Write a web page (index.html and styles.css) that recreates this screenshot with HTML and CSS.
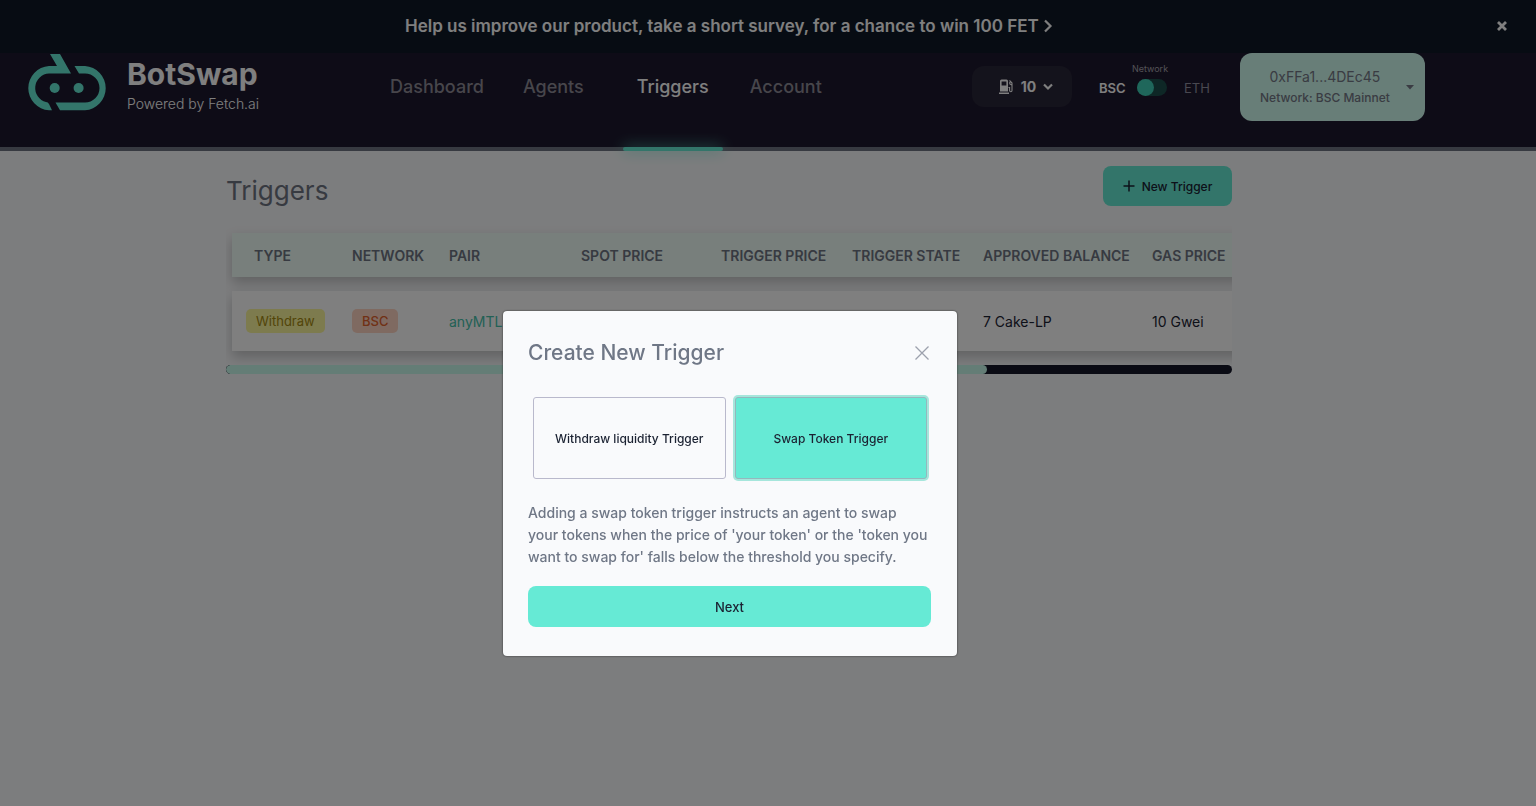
FILE: index.html
```html
<!DOCTYPE html>
<html lang="en">
<head>
<meta charset="utf-8">
<meta name="viewport" content="width=device-width, initial-scale=1">
<title>BotSwap</title>
<link rel="stylesheet" href="styles.css">
</head>
<body>
<div class="banner">
  <a class="banner-link" href="#">Help us improve our product, take a short survey, for a chance to win 100 FET
    <svg width="10" height="14" viewBox="0 0 10 14" aria-hidden="true"><path d="M2 1.500l5.500 5.500L2 12.500" fill="none" stroke="currentColor" stroke-width="2.200"/></svg></a>
  <button class="banner-close" type="button" aria-label="Dismiss">
    <svg width="12" height="12" viewBox="0 0 12 12"><path d="M2 2l8 8M10 2l-8 8" stroke="currentColor" stroke-width="2.800"/></svg>
  </button>
</div>
<header class="header">
  <a class="brand" href="#">
    <svg class="brand-mark" width="82" height="58" viewBox="0 0 82 58" aria-hidden="true">
      <path d="M24 1h10l11 19.500H23a14.500 14.500 0 0 0-3 28.500q2 0 3 2l3 6.300h-3A22.200 22.200 0 0 1 23 13h8z"/>
      <path d="M48.500 13H59a22.200 22.200 0 0 1 0 44.300H34L29.500 49.500H59a14.500 14.500 0 0 0 0-29h-6z"/>
      <circle cx="28.700" cy="35" r="5"/><circle cx="52.600" cy="35" r="5"/>
    </svg>
    <span class="brand-text"><span class="brand-name">BotSwap</span><span class="brand-sub">Powered by Fetch.ai</span></span>
  </a>
  <nav class="nav">
    <a href="#">Dashboard</a>
    <a href="#">Agents</a>
    <a class="current" href="#" aria-current="page">Triggers</a>
    <a href="#">Account</a>
  </nav>
  <div class="tools">
    <button class="gas" type="button">
      <svg width="15" height="16" viewBox="0 0 15 16" aria-hidden="true"><path fill="currentColor" fill-rule="evenodd" d="M1 2a1.500 1.500 0 0 1 1.500-1.500h5A1.500 1.500 0 0 1 9 2v10.500H1zM2.600 2.500v4h4.800v-4zM0 13.500h10V15H0z"/><path d="M10.500 1.500l2.500 2.500v7.500a1.200 1.200 0 0 1-2.400 0V8.500H9.500M10.800 3v2l2 1" fill="none" stroke="currentColor" stroke-width="1.100"/></svg>
      10
      <svg width="10" height="8" viewBox="0 0 10 8" aria-hidden="true"><path d="M1 1.500L5 5.500l4-4" fill="none" stroke="currentColor" stroke-width="2.200"/></svg>
    </button>
    <div class="network">
      <label class="network-label" for="net">Network</label>
      <span class="net-on">BSC</span>
      <input class="switch" id="net" type="checkbox" role="switch">
      <span class="net-off">ETH</span>
    </div>
    <button class="wallet" type="button">
      <span class="wallet-text"><span class="address">0xFFa1...4DEc45</span><span class="chain">Network: BSC Mainnet</span></span>
      <svg width="8" height="5" viewBox="0 0 8 5" aria-hidden="true"><path d="M0 0h8L4 4.500z" fill="currentColor"/></svg>
    </button>
  </div>
</header>
<main class="main">
  <div class="title-row">
    <h1>Triggers</h1>
    <button class="new-trigger" type="button">
      <svg width="12" height="12" viewBox="0 0 12 12" aria-hidden="true"><path d="M6 .5v11M.5 6h11" stroke="currentColor" stroke-width="1.500"/></svg>
      New Trigger
    </button>
  </div>
  <div class="table-wrap">
    <table>
      <colgroup><col class="c-type"><col class="c-network"><col class="c-pair"><col class="c-spot"><col class="c-price"><col class="c-state"><col class="c-balance"><col class="c-gas"></colgroup>
      <thead><tr><th>TYPE</th><th>NETWORK</th><th>PAIR</th><th>SPOT PRICE</th><th>TRIGGER PRICE</th><th>TRIGGER STATE</th><th>APPROVED BALANCE</th><th>GAS PRICE</th></tr></thead>
      <tbody><tr><td><span class="tag tag-withdraw">Withdraw</span></td><td><span class="tag tag-bsc">BSC</span></td><td><a class="pair" href="#">anyMTLX</a></td><td></td><td></td><td></td><td>7 Cake-LP</td><td>10 Gwei</td></tr></tbody>
    </table>
  </div>
  <div class="scrollbar"><div class="thumb" style="width:75.6%"></div></div>
</main>
<div class="overlay">
  <section class="modal" role="dialog" aria-modal="true" aria-labelledby="modal-title">
    <div class="modal-head">
      <h2 id="modal-title">Create New Trigger</h2>
      <button class="modal-close" type="button" aria-label="Close"><svg width="14" height="14" viewBox="0 0 14 14"><path d="M.5 .5l13 13M13.500 .5l-13 13" stroke="currentColor" stroke-width="1.300"/></svg></button>
    </div>
    <div class="options">
      <button class="option" type="button">Withdraw liquidity Trigger</button>
      <button class="option selected" type="button">Swap Token Trigger</button>
    </div>
    <p>Adding a swap token trigger instructs an agent to swap<br>your tokens when the price of 'your token' or the 'token you<br>want to swap for' falls below the threshold you specify.</p>
    <button class="next" type="button">Next</button>
  </section>
</div>
</body>
</html>
```

FILE: styles.css
```css
* { box-sizing: border-box; }
body {
  margin: 0;
  min-height: 100vh;
  background: #f9fafc;
  color: #1b2232;
  font-family: Inter, "Liberation Sans", sans-serif;
  font-size: 14px;
}
button { border: 0; padding: 0; background: none; color: inherit; font: inherit; }
a { color: inherit; text-decoration: none; }
h1, h2, p { margin: 0; }

.banner {
  display: flex;
  align-items: center;
  height: 53px;
  padding: 0 28px 2px 0;
  background: #0e1826;
  color: #fff;
}
.banner-link {
  flex: 1;
  padding-right: 38px;
  text-align: center;
  font-size: 17px;
  font-weight: 600;
}
.banner-link svg { vertical-align: -1px; }
.banner-close { display: flex; }

.header {
  display: flex;
  height: 98px;
  padding: 0 111px 0 26px;
  background: #1d182e;
  border-bottom: 4px solid #6f7482;
  color: #fff;
}
.brand { display: flex; gap: 19px; width: 364px; align-items: flex-start; }
.brand-mark { fill: #66ead5; }
.brand-text { display: flex; flex-direction: column; padding-top: 4px; }
.brand-name { font-size: 30px; line-height: 34px; font-weight: 700; }
.brand-sub { font-size: 14px; line-height: 26px; font-weight: 300; }
.nav { display: flex; gap: 39px; }
.nav a {
  padding-top: 22px;
  font-size: 18px;
  line-height: 24px;
  font-weight: 500;
  color: #8e8c97;
}
.nav .current {
  position: relative;
  padding-left: 14px;
  padding-right: 14px;
  margin-right: -12px;
  color: #fff;
}
.nav .current::after {
  content: "";
  position: absolute;
  inset: auto 0 -4px;
  height: 4px;
  border-radius: 2px;
  background: #66ead5;
  box-shadow: 0 0 14px #66ead5;
}
.tools { display: flex; flex: 1; align-items: flex-start; justify-content: flex-end; }
.gas {
  display: flex;
  align-items: center;
  justify-content: center;
  gap: 7px;
  width: 100px;
  height: 41px;
  padding-left: 8px;
  margin: 13px 27px 0 0;
  border-radius: 12px;
  background: #292638;
  font-weight: 700;
}
.network {
  display: grid;
  grid-template-columns: 38px 40px 30px;
  align-items: center;
  margin: 10px 33px 0 0;
  font-size: 13px;
}
.network-label { grid-column: 1 / -1; text-align: center; padding-right: 6px; font-size: 9px; line-height: 12px; color: #a5a3ad; }
.net-on { font-weight: 600; }
.net-off { color: #9391a0; padding-left: 7px; }
.switch {
  appearance: none;
  width: 30px;
  height: 17px;
  margin: 4px 0;
  border-radius: 9px;
  background: #1c4f4c;
}
.switch::before {
  content: "";
  display: block;
  width: 17px;
  height: 17px;
  border-radius: 50%;
  background: #3ecfb6;
}
.wallet {
  display: flex;
  align-items: center;
  justify-content: space-between;
  width: 185px;
  height: 68px;
  padding: 0 11px 0 20px;
  border-radius: 12px;
  background: #d0fcf0;
  color: #747886;
}
.wallet-text { display: flex; flex-direction: column; align-items: center; }
.address { font-size: 14px; line-height: 22px; }
.chain { font-size: 12px; line-height: 20px; font-weight: 500; }

.main { max-width: 1006px; margin: 15px 304px 0 auto; }
.title-row { display: flex; justify-content: space-between; height: 53px; }
h1 { font-size: 26px; line-height: 50px; font-weight: 400; color: #6f7482; }
.new-trigger {
  display: flex;
  align-items: center;
  justify-content: center;
  gap: 7px;
  width: 129px;
  height: 40px;
  border-radius: 8px;
  background: #66ead5;
  font-size: 12px;
  font-weight: 500;
}
.table-wrap { overflow: hidden; padding-left: 6px; }
table { table-layout: fixed; width: 1324px; border-collapse: separate; border-spacing: 0 14px; }
.c-type { width: 120px; }
.c-network { width: 97px; }
.c-pair { width: 132px; }
.c-spot { width: 140px; }
.c-price, .c-state { width: 131px; }
.c-balance { width: 169px; }
tr { box-shadow: 0 6px 12px rgba(0, 0, 0, .22); }
th, td { padding: 0; text-align: left; white-space: nowrap; }
th { height: 44px; background: #f0fff9; color: #6f7482; font-size: 14px; font-weight: 600; }
th:first-child { padding-left: 22px; }
td { height: 60px; background: #fff; }
td:first-child { padding-left: 14px; }
.tag { display: inline-block; padding: 0 10px; border-radius: 5px; font-size: 13px; line-height: 24px; }
.tag-withdraw { background: #fbf69c; color: #a58a10; }
.tag-bsc { background: #ffd5c3; color: #e2632c; font-weight: 500; }
.pair { color: #45c2ab; }
.scrollbar { height: 9px; border-radius: 5px; background: #151729; overflow: hidden; }
.thumb { height: 9px; border-radius: 5px; background: #c8fbed; }

.overlay {
  position: fixed;
  inset: 0;
  display: flex;
  align-items: flex-start;
  justify-content: center;
  padding: 311px 76px 0 0;
  background: rgba(0, 0, 0, .5);
}
.modal {
  width: 454px;
  padding: 26px 26px 29px 25px;
  border-radius: 4px;
  background: #f9fafc;
  box-shadow: 0 0 2px #222;
}
.modal-head { display: flex; align-items: center; justify-content: space-between; padding-right: 2px; color: #6f7786; }
h2 { font-size: 21px; line-height: 32px; font-weight: 500; }
.modal-close { display: flex; color: #9da1ad; }
.options { display: grid; grid-template-columns: 1fr 1fr; gap: 9px; padding: 28px 4px 23px 5px; }
.option { height: 82px; border: 1px solid #b9b9cc; border-radius: 3px; font-size: 12px; font-weight: 500; }
.selected { background: #66ead5; border-color: #94b8bd; box-shadow: 0 0 0 2px #a6e6dc; }
.modal p { font-size: 14px; line-height: 22px; font-weight: 500; color: #6f7786; }
.next { width: 100%; height: 41px; margin-top: 18px; border-radius: 8px; background: #66ead5; font-size: 13px; font-weight: 500; }
```
